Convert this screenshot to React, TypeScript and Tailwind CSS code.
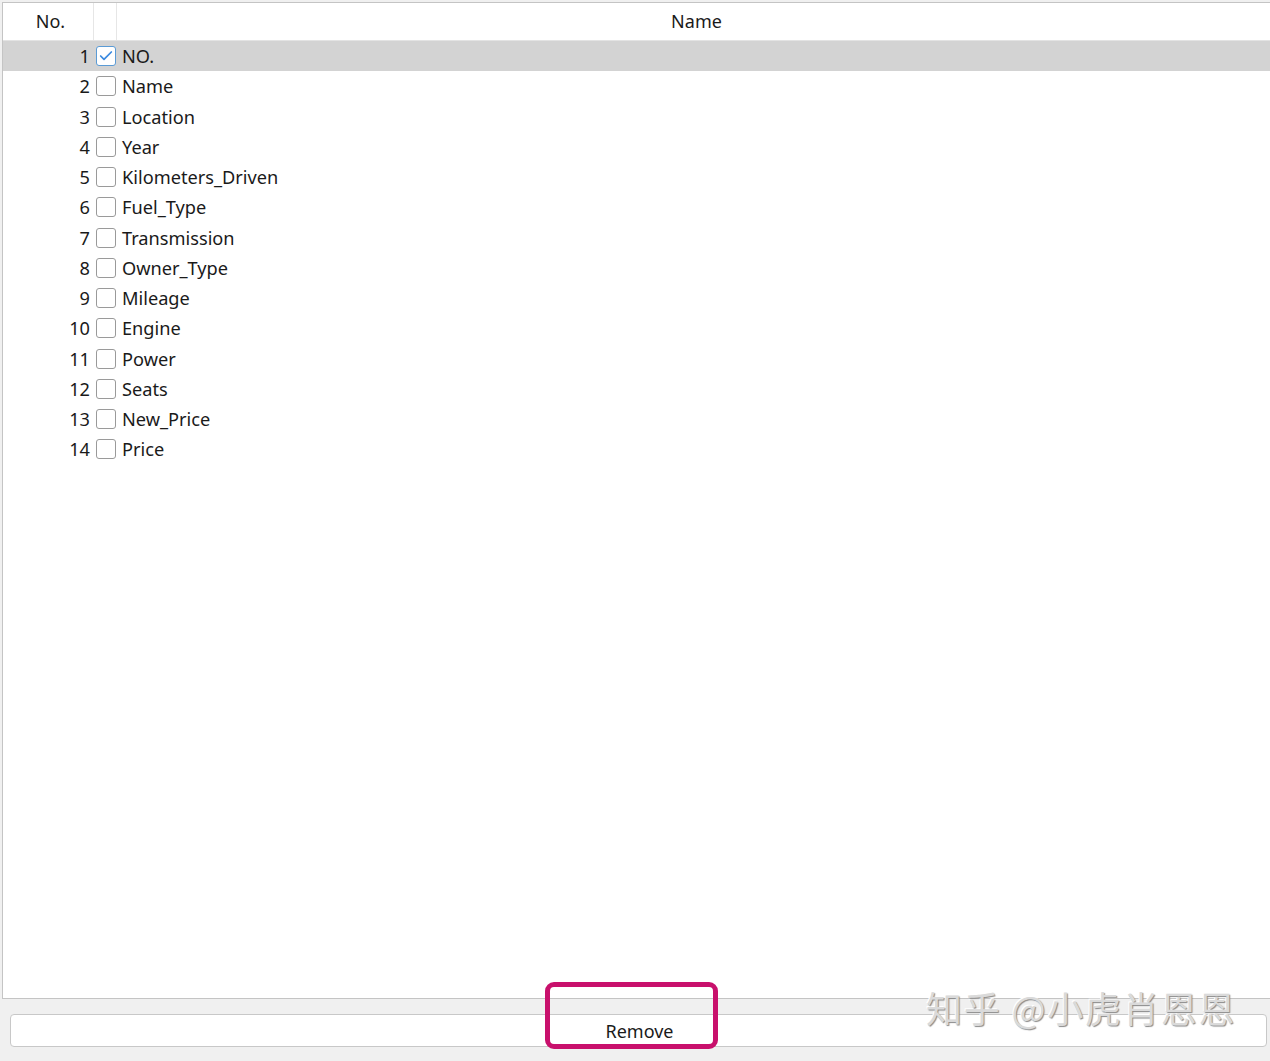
import { Check } from "lucide-react";

const fields = [
  "NO.",
  "Name",
  "Location",
  "Year",
  "Kilometers_Driven",
  "Fuel_Type",
  "Transmission",
  "Owner_Type",
  "Mileage",
  "Engine",
  "Power",
  "Seats",
  "New_Price",
  "Price",
];

export default function App() {
  const font = { fontFamily: '"Noto Sans", "Open Sans", sans-serif' };

  return (
    <div className="w-[1270px] h-[1061px] bg-[#f0f0f0] overflow-hidden relative text-[#1a1a1a]" style={font}>
      <div className="pl-[2px] pt-[2px]">
        {/* Table panel */}
        <div className="h-[997px] bg-white border-t border-l border-b border-[#c4c4c4] flex flex-col">
          {/* Header */}
          <div className="h-[38px] flex items-stretch border-b border-[#e3e3e3] text-[18px] shrink-0">
            <div className="w-[91px] flex items-center justify-center pl-[5px] border-r border-[#e6e6e6]">No.</div>
            <div className="w-[23px] border-r border-[#e6e6e6]" />
            <div className="flex-1 flex items-center justify-center pl-[6px]">Name</div>
          </div>

          {/* Rows */}
          <div className="flex flex-col">
            {fields.map((f, i) => (
              <div
                key={f}
                className={`h-[30.25px] flex items-center text-[18.2px] ${i === 0 ? "bg-[#d3d3d3]" : ""}`}
              >
                <div className="w-[87px] text-right leading-none">{i + 1}</div>
                <div
                  className={`ml-[6px] w-[20px] h-[20px] rounded-[3px] flex items-center justify-center ${
                    i === 0 ? "border border-[#5b9bd5] bg-white" : "border border-[#9a9a9a] bg-white"
                  }`}
                >
                  {i === 0 && <Check size={16} strokeWidth={2.6} className="text-[#3b8ae0]" />}
                </div>
                <div className="ml-[6px] leading-none">{f}</div>
              </div>
            ))}
          </div>
        </div>
      </div>

      {/* Button */}
      <div className="pl-[10px] pr-[3px] pt-[15px]">
        <div className="h-[33px] bg-white border border-[#c8c8c8] rounded-[4px] flex items-end justify-center text-[18px] pl-[2px]">
          <span className="leading-none pb-[6px]">Remove</span>
        </div>
      </div>

      {/* Highlight annotation */}
      <div className="absolute left-[545px] top-[982px] w-[173px] h-[67px] border-[5px] border-[#c8106c] rounded-[9px]" />

      {/* Watermark */}
      <div
        className="absolute left-[926px] top-[989px] text-[36px] leading-none text-[#dadada] tracking-[1.8px]"
        style={{
          fontFamily: '"Noto Sans CJK SC", "Noto Sans", sans-serif',
          textShadow: "1px 1px 1px #8a8a8a, -1px -1px 0 #ffffff",
        }}
      >
        知乎 @小虎肖恩恩
      </div>
    </div>
  );
}
